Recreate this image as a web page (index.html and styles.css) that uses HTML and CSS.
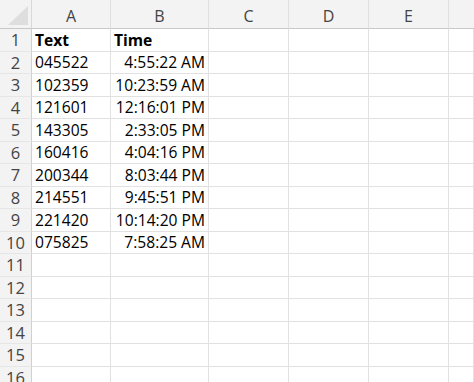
FILE: index.html
```html
<!DOCTYPE html>
<html>
<head>
<meta charset="utf-8">
<link rel="stylesheet" href="styles.css">
</head>
<body>
<div class="sheet">
  <div class="corner"><svg class="tri" width="20" height="19" viewBox="0 0 20 19"><polygon points="20,0 20,19 0,19" fill="#dedede"/></svg></div>
  <div class="ch">A</div><div class="ch">B</div><div class="ch">C</div><div class="ch">D</div><div class="ch">E</div><div class="ch last"></div>

  <div class="rh">1</div><div class="c b">Text</div><div class="c b">Time</div><div class="c"></div><div class="c"></div><div class="c"></div><div class="c"></div>
  <div class="rh">2</div><div class="c">045522</div><div class="c r">4:55:22 AM</div><div class="c"></div><div class="c"></div><div class="c"></div><div class="c"></div>
  <div class="rh">3</div><div class="c">102359</div><div class="c r">10:23:59 AM</div><div class="c"></div><div class="c"></div><div class="c"></div><div class="c"></div>
  <div class="rh">4</div><div class="c">121601</div><div class="c r">12:16:01 PM</div><div class="c"></div><div class="c"></div><div class="c"></div><div class="c"></div>
  <div class="rh">5</div><div class="c">143305</div><div class="c r">2:33:05 PM</div><div class="c"></div><div class="c"></div><div class="c"></div><div class="c"></div>
  <div class="rh">6</div><div class="c">160416</div><div class="c r">4:04:16 PM</div><div class="c"></div><div class="c"></div><div class="c"></div><div class="c"></div>
  <div class="rh">7</div><div class="c">200344</div><div class="c r">8:03:44 PM</div><div class="c"></div><div class="c"></div><div class="c"></div><div class="c"></div>
  <div class="rh">8</div><div class="c">214551</div><div class="c r">9:45:51 PM</div><div class="c"></div><div class="c"></div><div class="c"></div><div class="c"></div>
  <div class="rh">9</div><div class="c">221420</div><div class="c r">10:14:20 PM</div><div class="c"></div><div class="c"></div><div class="c"></div><div class="c"></div>
  <div class="rh">10</div><div class="c">075825</div><div class="c r">7:58:25 AM</div><div class="c"></div><div class="c"></div><div class="c"></div><div class="c"></div>
  <div class="rh">11</div><div class="c"></div><div class="c"></div><div class="c"></div><div class="c"></div><div class="c"></div><div class="c"></div>
  <div class="rh">12</div><div class="c"></div><div class="c"></div><div class="c"></div><div class="c"></div><div class="c"></div><div class="c"></div>
  <div class="rh">13</div><div class="c"></div><div class="c"></div><div class="c"></div><div class="c"></div><div class="c"></div><div class="c"></div>
  <div class="rh">14</div><div class="c"></div><div class="c"></div><div class="c"></div><div class="c"></div><div class="c"></div><div class="c"></div>
  <div class="rh">15</div><div class="c"></div><div class="c"></div><div class="c"></div><div class="c"></div><div class="c"></div><div class="c"></div>
  <div class="rh">16</div><div class="c"></div><div class="c"></div><div class="c"></div><div class="c"></div><div class="c"></div><div class="c"></div>
</div>
</body>
</html>
```

FILE: styles.css
```css
html, body {
  margin: 0;
  padding: 0;
  background: #ffffff;
  overflow: hidden;
}
.sheet {
  display: grid;
  grid-template-columns: 32px 79px 98px 80px 80px 80px 25px;
  grid-template-rows: 29px repeat(16, 22.5px);
  width: 474px;
  font-family: "Open Sans", "Noto Sans", sans-serif;
  font-size: 15.6px;
  color: #000;
}
.corner {
  background: #f3f3f3;
  border-right: 1px solid #d8d8d8;
  border-bottom: 1px solid #c8c8c8;
  box-sizing: border-box;
  position: relative;
}
.tri {
  position: absolute;
  right: 3px;
  bottom: 3px;
}
.ch {
  background: #f3f3f3;
  border-bottom: 1px solid #c8c8c8;
  border-right: 1px solid #e0e0e0;
  box-sizing: border-box;
  color: #444;
  display: flex;
  align-items: center;
  justify-content: center;
  padding-top: 4px;
  font-size: 16px;
}
.ch.last {
  border-right: none;
}
.rh {
  background: #f3f3f3;
  border-right: 1px solid #d0d0d0;
  border-bottom: 1px solid #e6e6e6;
  box-sizing: border-box;
  color: #444;
  display: flex;
  align-items: center;
  justify-content: center;
  font-size: 16.5px;
}
.c {
  border-right: 1px solid #e1e1e1;
  border-bottom: 1px solid #e1e1e1;
  box-sizing: border-box;
  display: flex;
  align-items: center;
  padding: 0 3px;
  white-space: nowrap;
  overflow: hidden;
}
.c.r {
  justify-content: flex-end;
}
.c.b {
  font-weight: bold;
}
```
